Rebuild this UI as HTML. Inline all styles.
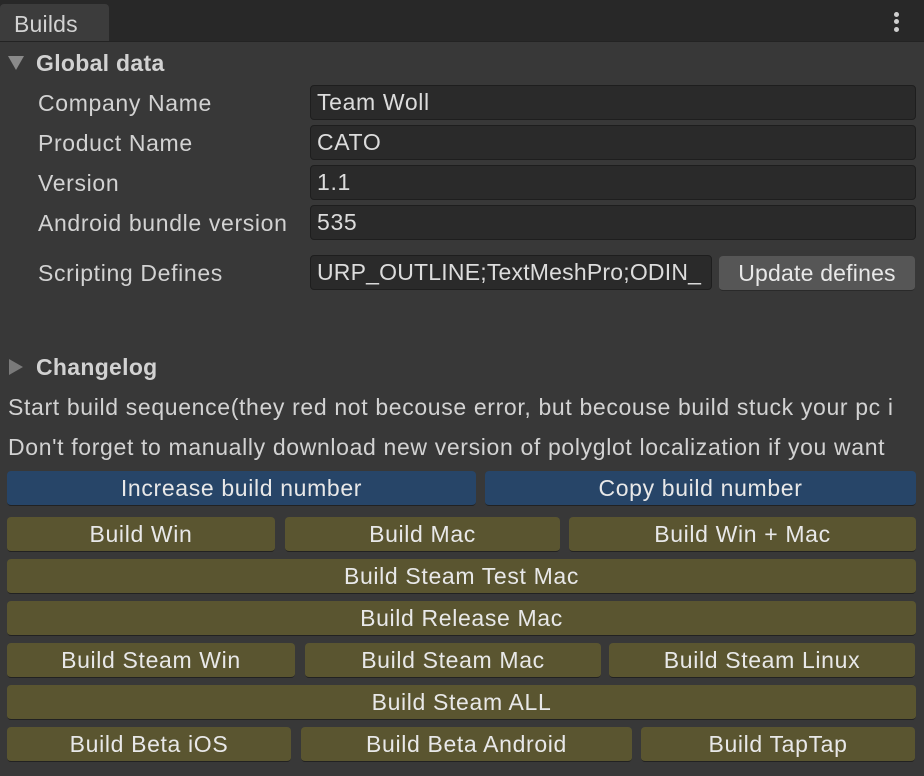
<!DOCTYPE html>
<html><head><meta charset="utf-8"><style>
*{margin:0;padding:0;box-sizing:border-box}
body{width:924px;height:776px;background:#383838;font-family:"Liberation Sans",sans-serif;font-size:23px;letter-spacing:0.65px;color:#d2d2d2;position:relative;overflow:hidden}
.a{position:absolute;white-space:nowrap}
.lbl{left:38px;line-height:34px}
.fld{left:310px;width:606px;height:35px;background:#2a2a2a;border:1px solid #1e1e1e;border-radius:4px;padding-left:6px;line-height:33px;color:#dcdcdc}
.b{position:absolute;height:35px;border-radius:4px;text-align:center;line-height:35px;color:#e8e8e8;border-bottom:1px solid #222}
.o{background:#5a5530}
.bl{background:#274568}
.h{font-weight:bold;line-height:34px;left:36px;letter-spacing:0.3px}
</style></head><body>
<div class="a" style="left:0;top:0;width:924px;height:41px;background:#282828"></div>
<div class="a" style="left:0;top:4px;width:109px;height:38px;background:#3c3c3c;border-radius:4px 4px 0 0;padding:6px 0 0 14px;line-height:28px;color:#d2d2d2;letter-spacing:0.2px">Builds</div>
<div class="a" style="left:894px;top:12px;width:5px;height:5px;border-radius:50%;background:#cfcfcf"></div>
<div class="a" style="left:894px;top:19px;width:5px;height:5px;border-radius:50%;background:#cfcfcf"></div>
<div class="a" style="left:894px;top:27px;width:5px;height:5px;border-radius:50%;background:#cfcfcf"></div>
<div class="a" style="left:0;top:41px;width:924px;height:1px;background:#232323"></div>

<svg class="a" style="left:8px;top:56px" width="16" height="14"><polygon points="0,0 16,0 8,14" fill="#8a8a8a"/></svg>
<div class="a h" style="top:46px">Global data</div>
<div class="a lbl" style="top:86px">Company Name</div>
<div class="a fld" style="top:85px">Team Woll</div>
<div class="a lbl" style="top:126px">Product Name</div>
<div class="a fld" style="top:125px">CATO</div>
<div class="a lbl" style="top:166px">Version</div>
<div class="a fld" style="top:165px">1.1</div>
<div class="a lbl" style="top:206px">Android bundle version</div>
<div class="a fld" style="top:205px">535</div>
<div class="a lbl" style="top:256px">Scripting Defines</div>
<div class="a fld" style="top:255px;width:402px;overflow:hidden;letter-spacing:0.2px">URP_OUTLINE;TextMeshPro;ODIN_</div>
<div class="b" style="left:719px;top:256px;width:196px;background:#565656;border-bottom:1px solid #2a2a2a;letter-spacing:0.2px">Update defines</div>

<svg class="a" style="left:9px;top:359px" width="14" height="16"><polygon points="0,0 14,8 0,16" fill="#7a7a7a"/></svg>
<div class="a h" style="top:350px">Changelog</div>
<div class="a" style="left:8px;top:390px;line-height:34px;width:912px;overflow:hidden">Start build sequence(they red not becouse error, but becouse build stuck your pc i</div>
<div class="a" style="left:8px;top:430px;line-height:34px;width:912px;overflow:hidden">Don't forget to manually download new version of polyglot localization if you want</div>

<div class="b bl" style="left:7px;top:471px;width:469px">Increase build number</div>
<div class="b bl" style="left:485px;top:471px;width:431px">Copy build number</div>

<div class="b o" style="left:7px;top:517px;width:268px">Build Win</div>
<div class="b o" style="left:285px;top:517px;width:275px">Build Mac</div>
<div class="b o" style="left:569px;top:517px;width:347px">Build Win + Mac</div>
<div class="b o" style="left:7px;top:559px;width:909px">Build Steam Test Mac</div>
<div class="b o" style="left:7px;top:601px;width:909px">Build Release Mac</div>
<div class="b o" style="left:7px;top:643px;width:288px">Build Steam Win</div>
<div class="b o" style="left:305px;top:643px;width:296px">Build Steam Mac</div>
<div class="b o" style="left:609px;top:643px;width:306px">Build Steam Linux</div>
<div class="b o" style="left:7px;top:685px;width:909px">Build Steam ALL</div>
<div class="b o" style="left:7px;top:727px;width:284px">Build Beta iOS</div>
<div class="b o" style="left:301px;top:727px;width:331px">Build Beta Android</div>
<div class="b o" style="left:641px;top:727px;width:274px">Build TapTap</div>
</body></html>
